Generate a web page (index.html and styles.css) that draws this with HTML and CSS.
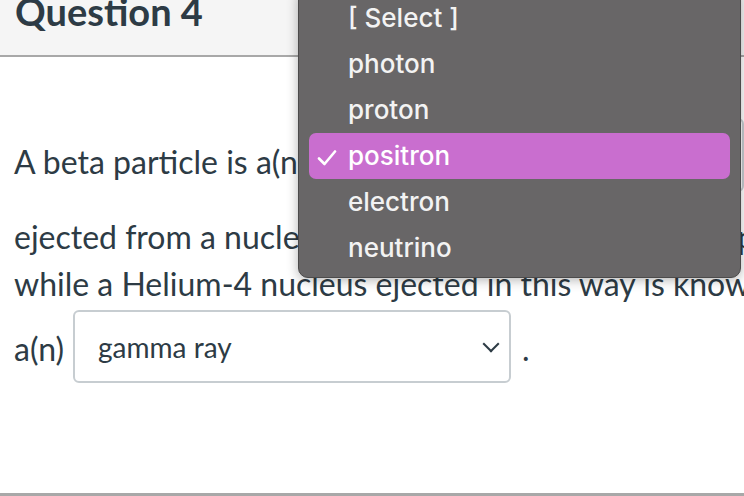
FILE: index.html
```html
<!DOCTYPE html>
<html lang="en">
<head>
  <meta charset="UTF-8">
  <title>Question 4</title>
  <link rel="stylesheet" href="styles.css">
</head>
<body>
  <div class="page">
    <div class="q-header">
      <h2 class="q-title">Question 4</h2>
    </div>

    <div class="q-body">
      <div class="row row-first">
        <span class="txt">A beta particle is a(n)</span>
        <div class="pick pick-wide">
          <span class="pick-val">positron</span>
          <span class="chev"></span>
        </div>
      </div>
      <div class="row row-line">
        <span class="txt">ejected from a nucleus, and a particle of light is a(n) photon</span>
      </div>
      <div class="row row-line">
        <span class="txt">while a Helium-4 nucleus ejected in this way is known as</span>
      </div>
      <div class="row row-last">
        <span class="txt">a(n)</span>
        <div class="pick">
          <span class="pick-val">gamma ray</span>
          <span class="chev"></span>
        </div>
        <span class="txt dot">.</span>
      </div>
    </div>

    <div class="q-footer"></div>

    <!-- open native select menu -->
    <ul class="menu">
      <li class="opt">[ Select ]</li>
      <li class="opt">photon</li>
      <li class="opt">proton</li>
      <li class="opt on">
        <svg class="tick" width="20" height="16" viewBox="0 0 20 16">
          <polyline points="2,8.5 7.5,14 18,1.5" fill="none" stroke="#fff" stroke-width="2.6" stroke-linecap="round" stroke-linejoin="round"/>
        </svg>positron
      </li>
      <li class="opt">electron</li>
      <li class="opt">neutrino</li>
    </ul>
  </div>
</body>
</html>
```

FILE: styles.css
```css
body {
  margin: 0;
  background: #fff;
  font-family: 'Lato', 'Liberation Sans', sans-serif;
  color: #2d3b45;
}

.page {
  position: relative;
  width: 744px;
  height: 496px;
  overflow: hidden;
}

.q-header {
  display: flex;
  align-items: flex-start;
  height: 57px;
  background: #f5f5f5;
  border-bottom: 2px solid #a8a8a8;
  box-sizing: border-box;
  padding-left: 15px;
}

.q-title {
  margin: -8px 0 0;
  font-size: 38px;
  font-weight: 700;
  line-height: 39px;
}

.q-body {
  display: flex;
  flex-direction: column;
  box-sizing: border-box;
  height: 436px;
  padding: 61px 0 0 14px;
}

.row {
  display: flex;
  white-space: nowrap;
  font-size: 32px;
}

.txt {
  line-height: 38px;
}

.row-first {
  align-items: flex-end;
}

.row-first .txt {
  margin-bottom: 11px;
}

.row-line {
  height: 47px;
}

.row-line .txt {
  line-height: 47px;
}

.row-first + .row-line {
  margin-top: 21px;
}

.row-last {
  margin-top: 3px;
  align-items: flex-end;
}

.row-last .txt {
  margin-bottom: 15px;
}

.pick {
  display: flex;
  align-items: center;
  justify-content: space-between;
  width: 438px;
  height: 73px;
  box-sizing: border-box;
  margin-left: 9px;
  padding: 0 12px 0 23px;
  border: 2px solid #c7cdd1;
  border-radius: 6px;
  background: #fff;
  font-size: 28px;
}

.pick-wide {
  width: 480px;
  height: 74px;
  margin-left: 10px;
}

.chev {
  width: 10px;
  height: 10px;
  border-right: 2px solid #2d3b45;
  border-bottom: 2px solid #2d3b45;
  transform: rotate(45deg);
  margin-top: -6px;
}

.dot {
  margin-left: 11px;
}

.q-footer {
  border-top: 3px solid #a8a8a8;
}

.menu {
  position: absolute;
  top: -12px;
  left: 298px;
  width: 443px;
  height: 290px;
  box-sizing: border-box;
  margin: 0;
  padding: 6px 10px;
  list-style: none;
  background: #686667;
  border: 1px solid #4c4b4b;
  border-radius: 10px;
  box-shadow: 0 2px 12px rgba(0, 0, 0, 0.3);
  font-family: 'Inter', 'Liberation Sans', sans-serif;
  font-size: 26px;
  font-weight: 500;
  color: #f3f3f3;
}

.opt {
  position: relative;
  height: 46px;
  line-height: 46px;
  padding-left: 39px;
  border-radius: 7px;
}

.opt.on {
  background: #c96ecf;
  color: #fff;
}

.tick {
  position: absolute;
  left: 8px;
  top: 17px;
}
```
